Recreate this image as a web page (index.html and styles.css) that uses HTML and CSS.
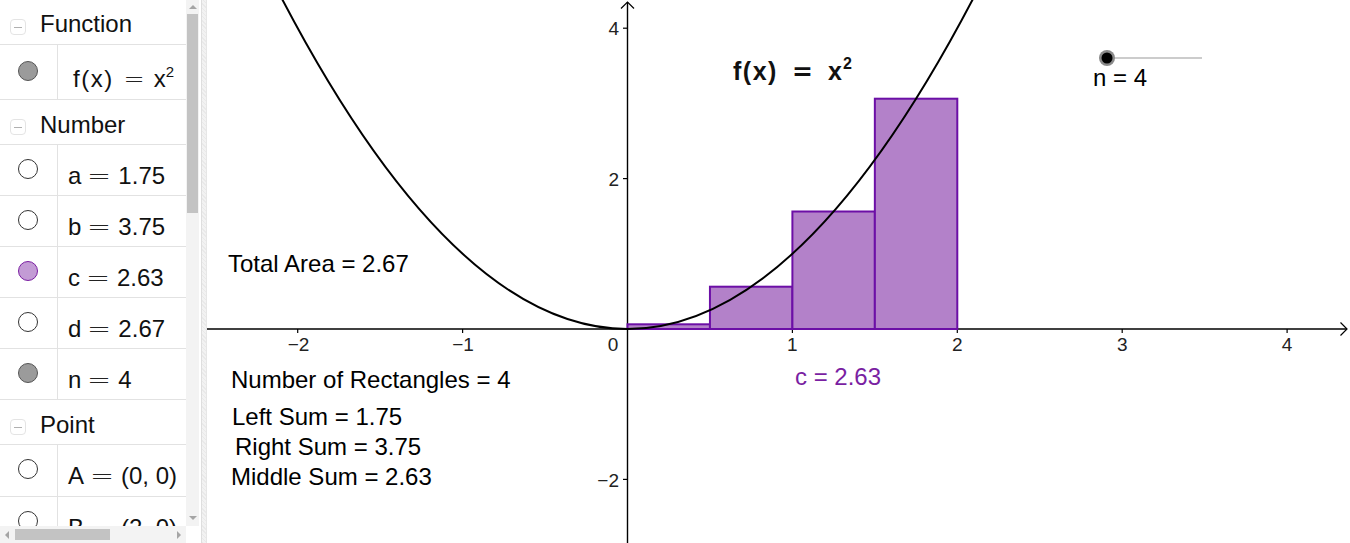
FILE: index.html
```html
<!DOCTYPE html>
<html lang="en">
<head>
<meta charset="utf-8">
<title>Riemann Sums</title>
<link rel="stylesheet" href="styles.css">
</head>
<body>
<div class="app">
  <aside class="sidebar">
    <div class="list">
      <div class="group group-first"><span class="toggle"></span><span class="group-name">Function</span></div>
      <div class="item item-func"><div class="marker"><span class="dot dot-grey"></span></div><div class="value value-func"><span class="fx">f(x)</span><span class="eq eq-func">=</span>x<sup class="sup">2</sup></div></div>
      <div class="group"><span class="toggle"></span><span class="group-name">Number</span></div>
      <div class="item"><div class="marker"><span class="dot dot-empty"></span></div><div class="value">a<span class="eq">=</span>1.75</div></div>
      <div class="item"><div class="marker"><span class="dot dot-empty"></span></div><div class="value">b<span class="eq">=</span>3.75</div></div>
      <div class="item"><div class="marker"><span class="dot dot-purple"></span></div><div class="value">c<span class="eq">=</span>2.63</div></div>
      <div class="item"><div class="marker"><span class="dot dot-empty"></span></div><div class="value">d<span class="eq">=</span>2.67</div></div>
      <div class="item"><div class="marker"><span class="dot dot-grey"></span></div><div class="value">n<span class="eq">=</span>4</div></div>
      <div class="group"><span class="toggle"></span><span class="group-name">Point</span></div>
      <div class="item item-a"><div class="marker"><span class="dot dot-empty"></span></div><div class="value">A<span class="eq">=</span>(0, 0)</div></div>
      <div class="item"><div class="marker"><span class="dot dot-empty"></span></div><div class="value">B<span class="eq">=</span>(2, 0)</div></div>
    </div>
    <div class="vscroll">
      <span class="tri tri-up"></span>
      <div class="vthumb"></div>
      <span class="vspace"></span>
      <span class="tri tri-down"></span>
    </div>
    <div class="hscroll">
      <span class="tri tri-left"></span>
      <div class="hthumb"></div>
      <span class="hspace"></span>
      <span class="tri tri-right"></span>
    </div>
    <div class="corner"></div>
  </aside>
  <div class="divider"></div>
  <main class="canvas">
    <svg class="plot" viewBox="207 0 1143 543" width="1143" height="543" xmlns="http://www.w3.org/2000/svg">
      <!-- axes -->
      <line class="axis" x1="207" y1="329" x2="1347" y2="329"/>
      <polyline class="axis-arrow" points="1340.5,322.5 1347,329 1340.5,335.5"/>
      <line class="axis" x1="627.5" y1="2" x2="627.5" y2="543"/>
      <polyline class="axis-arrow" points="621,8.5 627.5,2 634,8.5"/>
      <!-- x ticks -->
      <line class="tick" x1="297.7" y1="329" x2="297.7" y2="333"/>
      <line class="tick" x1="462.6" y1="329" x2="462.6" y2="333"/>
      <line class="tick" x1="792.4" y1="329" x2="792.4" y2="333"/>
      <line class="tick" x1="957.3" y1="329" x2="957.3" y2="333"/>
      <line class="tick" x1="1122.2" y1="329" x2="1122.2" y2="333"/>
      <line class="tick" x1="1287.1" y1="329" x2="1287.1" y2="333"/>
      <!-- y ticks -->
      <line class="tick" x1="623" y1="28.2" x2="627.5" y2="28.2"/>
      <line class="tick" x1="623" y1="178.6" x2="627.5" y2="178.6"/>
      <line class="tick" x1="623" y1="479.4" x2="627.5" y2="479.4"/>
      <!-- axis labels -->
      <text class="num" x="298.5" y="351" text-anchor="middle">−2</text>
      <text class="num" x="463" y="351" text-anchor="middle">−1</text>
      <text class="num" x="613" y="351" text-anchor="middle">0</text>
      <text class="num" x="792.4" y="351" text-anchor="middle">1</text>
      <text class="num" x="957.3" y="351" text-anchor="middle">2</text>
      <text class="num" x="1122.2" y="351" text-anchor="middle">3</text>
      <text class="num" x="1287.1" y="351" text-anchor="middle">4</text>
      <text class="num" x="619" y="35" text-anchor="end">4</text>
      <text class="num" x="619" y="185.5" text-anchor="end">2</text>
      <text class="num" x="619" y="486.5" text-anchor="end">−2</text>
      <!-- rectangles (midpoint rule, n = 4) -->
      <rect class="bar" x="627.5" y="324.3" width="82.45" height="4.7"/>
      <rect class="bar" x="709.95" y="286.7" width="82.45" height="42.3"/>
      <rect class="bar" x="792.4" y="211.5" width="82.45" height="117.5"/>
      <rect class="bar" x="874.85" y="98.7" width="82.45" height="230.3"/>
      <!-- f(x) = x^2 -->
      <path class="curve" d="M277.9,-9 Q627.5,667 977.1,-9"/>
      <!-- texts -->
      <text class="title" x="733" y="80">f(x)<tspan class="title-eq" x="792">=</tspan><tspan x="828">x</tspan><tspan class="title-sup" x="843" dy="-11">2</tspan></text>
      <text class="label" x="228" y="272">Total Area = 2.67</text>
      <text class="label" x="231" y="388">Number of Rectangles = 4</text>
      <text class="label" x="232" y="425">Left Sum = 1.75</text>
      <text class="label" x="235" y="455">Right Sum = 3.75</text>
      <text class="label" x="231" y="485">Middle Sum = 2.63</text>
      <text class="label label-c" x="795" y="385">c = 2.63</text>
      <!-- slider n -->
      <line class="slider-line" x1="1107" y1="58" x2="1202" y2="58"/>
      <circle class="slider-halo" cx="1107" cy="58" r="8"/>
      <circle class="slider-knob" cx="1107" cy="58" r="5.5"/>
      <text class="label" x="1093" y="86">n = 4</text>
    </svg>
  </main>
</div>
</body>
</html>
```

FILE: styles.css
```css
* { box-sizing: border-box; }
html, body { margin: 0; padding: 0; background: #fff; }
body { font-family: "Liberation Sans", Arial, sans-serif; color: #000; overflow: hidden; }

.app { display: flex; width: 1350px; height: 543px; }

/* ---------- sidebar (algebra view) ---------- */
.sidebar {
  width: 201px;
  flex: 0 0 201px;
  display: grid;
  grid-template-columns: 186px 13px;
  grid-template-rows: 526px 17px;
  padding-right: 2px;
  background: #fff;
}
.list { overflow: hidden; white-space: nowrap; }

.group {
  height: 45px;
  border-bottom: 1px solid #e2e2e2;
  display: flex;
  align-items: flex-start;
  padding-left: 10px;
}
.toggle {
  width: 16px; height: 16px;
  margin-top: 19px;
  border: 1px solid #e4e4e4;
  border-radius: 4px;
  display: flex; align-items: center; justify-content: center;
}
.toggle::after { content: ""; width: 8px; height: 1px; background: #b0b0b0; }
.group-name {
  font-size: 24px; line-height: 28px;
  margin-left: 14px;
  padding-top: 11px;
  color: #111;
}
.group-first .group-name { padding-top: 10px; }

.item { height: 51px; border-bottom: 1px solid #e2e2e2; display: flex; }
.item-func { height: 55px; }
.item-a { height: 52px; }
.marker {
  width: 58px; flex: 0 0 58px;
  border-right: 1px solid #e2e2e2;
  padding-top: 14px; padding-left: 18px;
}
.item-func .marker { padding-top: 16px; }
.dot { display: block; width: 20px; height: 20px; border-radius: 50%; }
.dot-grey { background: #9b9b9b; border: 1px solid #555; }
.dot-empty { background: #fff; border: 1px solid #333; }
.dot-purple { background: #c39bd5; border: 1px solid #7b1fa2; }

.value {
  font-size: 24px; line-height: 28px;
  padding-top: 17px; padding-left: 10px;
  color: #111;
}
.value-func { padding-top: 20px; padding-left: 15px; }
.fx { letter-spacing: 1.5px; }
.eq {
  display: inline-block;
  font-family: "DejaVu Sans", sans-serif;
  font-size: 23px;
  font-weight: 300;
  width: 20px;
  text-align: center;
  color: #222;
  transform: scaleX(1.25);
  margin: 0 9px 0 8px;
}
.eq-func { transform: scaleX(1.1); margin: 0 10px 0 10px; }
.sup { font-size: 15px; vertical-align: 10px; line-height: 0; }

/* scrollbars */
.vscroll {
  background: #f3f3f3;
  display: flex; flex-direction: column; align-items: center;
  padding-top: 5px; padding-bottom: 6px;
}
.vthumb { width: 11px; height: 199px; background: #c3c3c3; margin-top: 5px; }
.vspace { flex: 1; }
.hscroll {
  background: #f3f3f3;
  display: flex; align-items: center;
  padding-left: 5px; padding-right: 5px;
}
.hthumb { width: 95px; height: 11px; background: #c3c3c3; margin-left: 6px; }
.hspace { flex: 1; }
.corner { background: #fff; }
.tri { display: block; width: 0; height: 0; }
.tri-up { border-left: 4px solid transparent; border-right: 4px solid transparent; border-bottom: 4px solid #a5a5a5; }
.tri-down { border-left: 4px solid transparent; border-right: 4px solid transparent; border-top: 4px solid #a5a5a5; }
.tri-left { border-top: 4px solid transparent; border-bottom: 4px solid transparent; border-right: 4px solid #a5a5a5; }
.tri-right { border-top: 4px solid transparent; border-bottom: 4px solid transparent; border-left: 4px solid #a5a5a5; }

.divider {
  width: 6px; flex: 0 0 6px;
  border-left: 1px solid #dedede;
  border-right: 1px solid #e6e6e6;
  background-color: #f2f2f2;
  background-image: repeating-linear-gradient(45deg, #e9e9e9 0 1px, transparent 1px 3px);
}

/* ---------- graphics view ---------- */
.canvas { flex: 1; height: 543px; overflow: hidden; }
.plot { display: block; }
.axis { stroke: #000; stroke-width: 1.4; }
.axis-arrow { fill: none; stroke: #000; stroke-width: 1.2; }
.tick { stroke: #000; stroke-width: 1.2; }
.num { font-family: "Liberation Sans", Arial, sans-serif; font-size: 19px; fill: #222; }
.bar { fill: #b381c9; stroke: #6c0fa6; stroke-width: 2; }
.curve { fill: none; stroke: #000; stroke-width: 2; }
.title { font-family: "Liberation Sans", Arial, sans-serif; font-weight: bold; font-size: 25px; letter-spacing: 1.5px; fill: #111; }
.title-eq { font-family: "DejaVu Sans", sans-serif; font-weight: bold; letter-spacing: 0; }
.title-sup { font-size: 16px; letter-spacing: 0; }
.label { font-family: "Liberation Sans", Arial, sans-serif; font-size: 24px; fill: #000; }
.label-c { fill: #7a1fa2; }
.slider-line { stroke: #999; stroke-width: 1.2; }
.slider-halo { fill: #8a8a8a; }
.slider-knob { fill: #000; }
```
